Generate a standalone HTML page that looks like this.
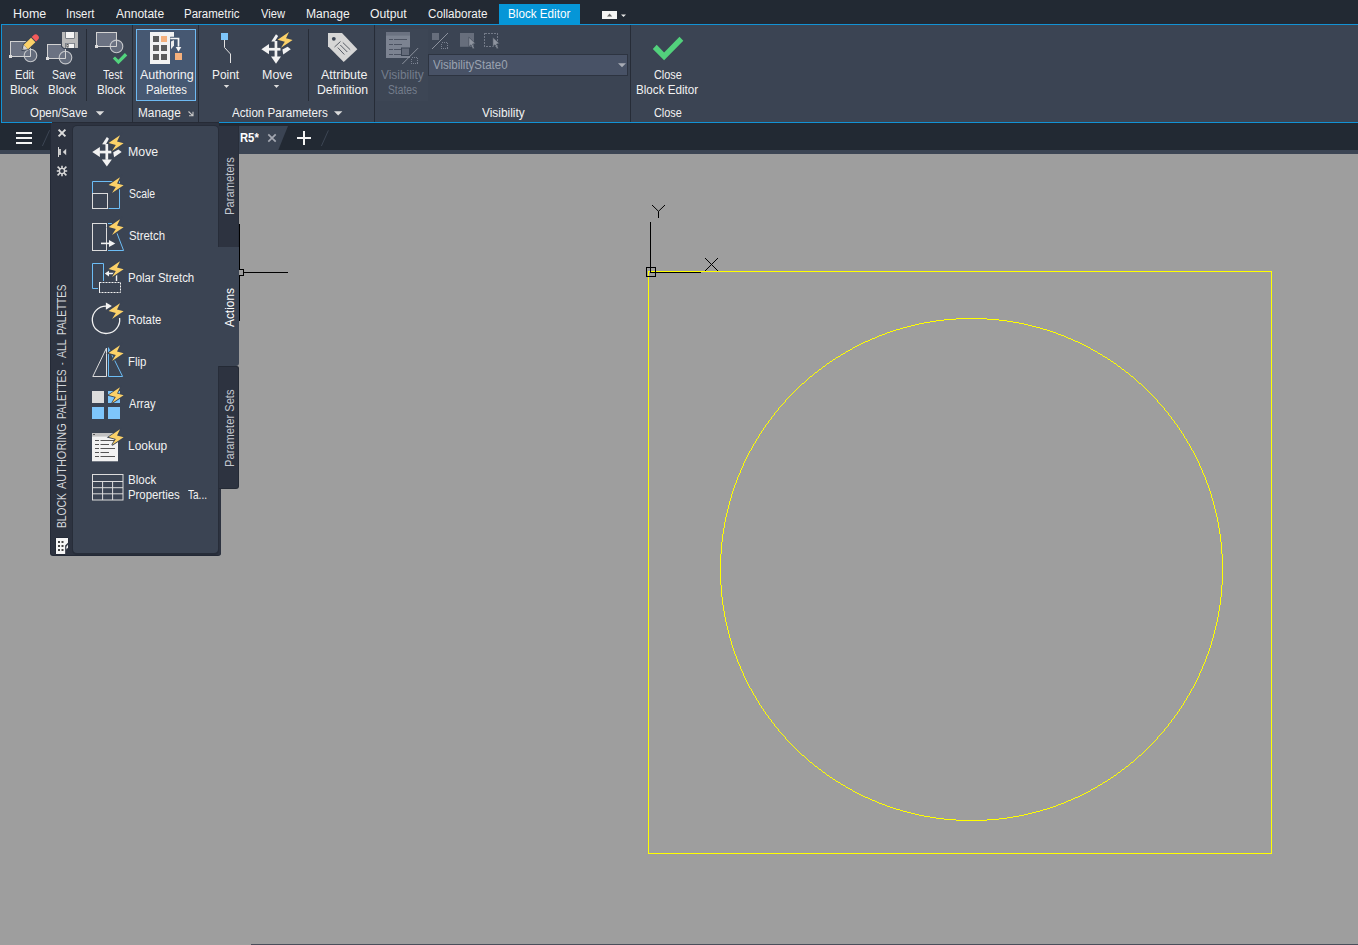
<!DOCTYPE html>
<html>
<head>
<meta charset="utf-8">
<title>Block Editor</title>
<style>
html,body{margin:0;padding:0;}
body{width:1358px;height:945px;overflow:hidden;background:#9e9e9e;font-family:"Liberation Sans",sans-serif;position:relative;}
.a{position:absolute;}
.t{position:absolute;white-space:nowrap;font-size:12.5px;line-height:14px;color:#f2f2f2;transform-origin:0 0;}
.v{position:absolute;white-space:nowrap;font-size:12.5px;line-height:14px;color:#f2f2f2;transform-origin:0 0;}
svg{position:absolute;overflow:visible;}
.sep{position:absolute;width:1px;background:#262c37;}
</style>
</head>
<body>
<!-- ===== top menu bar ===== -->
<div class="a" style="left:0;top:0;width:1358px;height:24px;background:#222933;"></div>
<div class="a" style="left:499px;top:4px;width:81px;height:21px;background:#0696d7;"></div>
<div class="a" style="left:602px;top:11px;width:15px;height:8px;background:#f4f4f4;"></div>
<svg style="left:602px;top:11px;" width="26" height="8"><path d="M5 5.6 L7.6 2.6 L10.2 5.6Z" fill="#666"/><path d="M19 3.5 L24 3.5 L21.5 6Z" fill="#e8e8e8"/></svg>

<!-- ===== ribbon ===== -->
<div class="a" style="left:0;top:24px;width:1358px;height:99px;background:#3b4453;"></div>
<div class="a" style="left:499px;top:4px;width:81px;height:21px;background:#0696d7;"></div>
<div class="a" style="left:0;top:24px;width:499px;height:1px;background:#1292d5;"></div>
<div class="a" style="left:580px;top:24px;width:778px;height:1px;background:#1292d5;"></div>
<div class="a" style="left:0;top:122px;width:1358px;height:1px;background:#1292d5;"></div>
<div class="a" style="left:1px;top:24px;width:1px;height:99px;background:#1292d5;"></div>
<div class="a" style="left:0;top:24px;width:1px;height:99px;background:#222933;"></div>
<!-- panel separators -->
<div class="sep" style="left:132px;top:25px;height:97px;"></div>
<div class="sep" style="left:198px;top:25px;height:97px;"></div>
<div class="sep" style="left:374px;top:25px;height:97px;"></div>
<div class="sep" style="left:630px;top:25px;height:97px;"></div>
<!-- inner separators -->
<div class="sep" style="left:86px;top:29px;height:72px;"></div>
<div class="sep" style="left:308px;top:29px;height:72px;"></div>
<!-- vis-states-bg (disabled button faint bg) -->
<div class="a" style="left:376px;top:29px;width:52px;height:72px;background:#3d4655;"></div>
<!-- authoring palettes highlighted button -->
<div class="a" style="left:136px;top:29px;width:58px;height:70px;background:#465872;border:1px solid #6db9f2;"></div>
<svg style="left:0;top:0;" width="1358" height="124" viewBox="0 0 1358 124">
<!-- Edit Block -->
<rect x="10.5" y="41.5" width="20" height="15" fill="#6b7282" stroke="#d2d2d2"/>
<circle cx="30.5" cy="55.5" r="6.3" fill="#6b7282" fill-opacity="0.85" stroke="#c4c6ca" stroke-width="1.1"/>
<path d="M10.5 56.5 H30.5 V41.5" fill="none" stroke="#d2d2d2"/>
<rect x="9" y="55" width="3" height="3" fill="#dcdcdc"/>
<g transform="translate(22.5,50.1) rotate(-43.5)">
  <path d="M0 0 L4.6 -3.1 H15.3 V-3.1 H18.2 A3.1 3.1 0 0 1 18.2 3.1 H4.6Z" fill="#3b4453" stroke="#3b4453" stroke-width="1.6"/>
  <path d="M0 0 L4.6 -3.1 L4.6 3.1Z" fill="#d4d4d4"/>
  <path d="M0 0 L1.8 -1.2 L1.8 1.2Z" fill="#9a9a9a"/>
  <rect x="4.6" y="-3.1" width="10.2" height="6.2" fill="#fbd168"/>
  <path d="M15.7 -3.1 H18.2 A3.1 3.1 0 0 1 18.2 3.1 H15.7Z" fill="#f55b5b"/>
</g>
<!-- Save Block -->
<rect x="47.5" y="44.5" width="18" height="14" fill="#6b7282" stroke="#d2d2d2"/>
<circle cx="65.5" cy="57.6" r="6.3" fill="#6b7282" fill-opacity="0.85" stroke="#c4c6ca" stroke-width="1.1"/>
<path d="M47.5 58.5 H65.5 V44.5" fill="none" stroke="#d2d2d2"/>
<rect x="46" y="57" width="3" height="3" fill="#dcdcdc"/>
<path d="M61 31 H79 V49 H63.5 L61 46.5Z" fill="#3b4453"/>
<path d="M62 32 H78 V48 H64 L62 46Z" fill="#b9b9b9"/>
<rect x="65.5" y="31.5" width="9" height="7" fill="#3b4453"/><rect x="66" y="32" width="8" height="6" fill="#f4f4f4"/>
<rect x="65.5" y="43" width="9" height="5.5" fill="#3b4453"/><rect x="66" y="43.6" width="8" height="4.4" fill="#f4f4f4"/>
<rect x="66.8" y="44.6" width="1.4" height="2.6" fill="none" stroke="#444" stroke-width="0.7"/>
<!-- Test Block -->
<rect x="96.5" y="32.5" width="20" height="14" fill="#6b7282" stroke="#d2d2d2"/>
<circle cx="116.5" cy="46.4" r="6.3" fill="#6b7282" fill-opacity="0.85" stroke="#c4c6ca" stroke-width="1.1"/>
<path d="M96.5 46.5 H116.5 V32.5" fill="none" stroke="#d2d2d2"/>
<rect x="95" y="45" width="3" height="3" fill="#dcdcdc"/>
<path d="M112.8 58.6 L115 56.4 L118.4 59.8 L124.9 53.1 L127.3 55.4 L118.4 64.3Z" fill="#52d37d"/>
<!-- Authoring palettes -->
<path d="M150 32 H174 V37.2 H170 V64 H150Z" fill="#f2f2f2"/>
<path d="M171 41.6 L174 39.7 V45.6 L171 49.2Z" fill="#ececec"/>
<rect x="153" y="36" width="6" height="6" fill="#5b5b5b"/><rect x="161" y="36" width="6" height="6" fill="#f5b07c"/>
<rect x="153" y="45" width="6" height="6" fill="#5b5b5b"/><rect x="161" y="45" width="6" height="6" fill="#5b5b5b"/>
<rect x="153" y="54" width="6" height="6" fill="#5b5b5b"/><rect x="161" y="54" width="6" height="6" fill="#5b5b5b"/>
<path d="M170.3 38.5 H178.5 V48" fill="none" stroke="#465872" stroke-width="3.4"/><path d="M170.3 38.5 H178.5 V48" fill="none" stroke="#f6f6f6" stroke-width="1.7"/>
<path d="M175.7 47 H181.3 L178.5 51.7Z" fill="#f6f6f6" stroke="#465872" stroke-width="0.8" paint-order="stroke"/>
<rect x="175" y="53" width="7" height="7" fill="#f5b07c"/>
<!-- Point -->
<rect x="221" y="33" width="7" height="7" fill="#7ec6fb"/>
<path d="M224.5 40 V47.5 L230.5 54 V63" fill="none" stroke="#e2e2e2" stroke-width="1"/>
<path d="M223.8 85 H229.2 L226.5 88Z" fill="#dcdcdc"/>
<!-- Move -->
<g transform="translate(260,30)"><path d="M11.3 11.4 L16 4.3 L18.1 5.9 L15 11.6Z" fill="#f2f2f2"/>
    <path d="M22.4 19.5 L27.6 16.8 L30.8 19.2 L23.2 24.4Z" fill="#f2f2f2"/>
    <path d="M1.4 19.2 L9 14.1 L9 24.3Z" fill="#f2f2f2"/>
    <path d="M11 26.6 L21 26.6 L16 33.8Z" fill="#f2f2f2"/>
    <rect x="8.5" y="17.9" width="12" height="2.7" fill="#f2f2f2"/>
    <rect x="14.6" y="11" width="2.7" height="16" fill="#f2f2f2"/></g>
<path transform="translate(289,32)" d="M0 0 L-11.4 7.8 L-4.2 9.7 L-8 15.8 L3.6 8 L-3 6.2Z" fill="#fbd168" stroke="#3b4453" stroke-width="2" paint-order="stroke"/>
<path d="M273.8 85 H279.2 L276.5 88Z" fill="#dcdcdc"/>
<!-- Attribute definition -->
<path d="M328 33 H342 L357.4 49.2 L343.7 62 L328 46.2Z" fill="#d6d6d6"/>
<circle cx="333.8" cy="38.8" r="1.9" fill="#3b4453"/>
<g stroke="#4a4f5a" stroke-width="0.9" fill="none">
<path d="M334.5 47 L340.5 41.5"/>
<path d="M337.8 47.6 L344.3 54.5"/>
<path d="M340.3 45 L347.3 52"/>
<path d="M342.8 42.5 L350.2 49.7"/>
</g>
<!-- Visibility states (disabled) -->
<rect x="386" y="32" width="24" height="26" fill="#7c8391"/>
<rect x="386" y="32" width="24" height="3.6" fill="#6b7281"/>
<g stroke="#4c5362" stroke-width="1">
<path d="M389 39.5 H393 M394 39.5 H407"/>
<path d="M389 44.5 H393 M394 44.5 H402"/>
<path d="M389 49.5 H393 M394 49.5 H401"/>
<path d="M389 54.5 H393 M394 54.5 H401"/>
</g>
<rect x="401.5" y="48" width="8" height="7.5" fill="#646b7a" stroke="#3b4453" stroke-width="1"/>
<path d="M402.3 64 L418.1 48.1" stroke="#8c929e" stroke-width="1" fill="none"/>
<rect x="411.5" y="57.5" width="6" height="6" fill="none" stroke="#7a8190" stroke-width="1" stroke-dasharray="1 1" shape-rendering="crispEdges"/>
<!-- small icons -->
<rect x="432" y="33" width="7" height="7" fill="#676e7c"/>
<path d="M432 49 L448 33" stroke="#8c929e" stroke-width="1" fill="none"/>
<rect x="441.5" y="42.5" width="6" height="6" fill="none" stroke="#7a8190" stroke-width="1" stroke-dasharray="1 1" shape-rendering="crispEdges"/>
<rect x="460" y="33" width="14" height="13.8" fill="#676e7c"/>
<path d="M468.8 37.2 L475.5 43.6 L472.6 44 L474.4 48.2 L472.8 49 L471 44.8 L468.8 46.8Z" fill="#8e949f" stroke="#3b4453" stroke-width="0.6"/>
<rect x="484.5" y="33.5" width="13" height="13" fill="none" stroke="#737a88" stroke-width="1" stroke-dasharray="2 1" shape-rendering="crispEdges"/>
<path d="M492.8 37.2 L499.5 43.6 L496.6 44 L498.4 48.2 L496.8 49 L495 44.8 L492.8 46.8Z" fill="#8e949f" stroke="#3b4453" stroke-width="0.6"/>
<!-- dropdown -->
<rect x="428.5" y="54.5" width="199" height="21" fill="#485266" stroke="#2d3441"/>
<path d="M618 63.2 H626 L622 67.2Z" fill="#a9adb6"/>
<!-- Close -->
<path d="M652.8 48.9 L656.7 44.8 L664.1 52.4 L679.5 36.7 L683.3 40.7 L664.1 60.2Z" fill="#52d17c"/>
<!-- panel title arrows -->
<path d="M95.8 111.2 H104.2 L100 115.4Z" fill="#dcdcdc"/>
<path d="M334 111.2 H342.4 L338.2 115.4Z" fill="#dcdcdc"/>
<path d="M188.5 111.5 L192.5 115.3 M193 111.8 V115.7 H189" stroke="#c8c8c8" stroke-width="1.1" fill="none"/>
</svg>


<!-- ===== file tab bar ===== -->
<div class="a" style="left:0;top:123px;width:1358px;height:27px;background:#222933;"></div>
<div class="a" style="left:0;top:150px;width:1358px;height:4px;background:#3c4554;"></div>
<svg style="left:0;top:0;" width="1358" height="160" viewBox="0 0 1358 160">
<rect x="16" y="132" width="16" height="2" fill="#f4f4f4"/>
<rect x="16" y="137" width="16" height="2" fill="#f4f4f4"/>
<rect x="16" y="142" width="16" height="2" fill="#f4f4f4"/>
<path d="M42.4 146 L49.6 130.2" stroke="#3c4553" stroke-width="1" fill="none"/>
<!-- file tab -->
<path d="M225 126 H288 L278.3 150 H225Z" fill="#3b4453"/>
<path d="M268.3 134.3 L275.7 141.7 M275.7 134.3 L268.3 141.7" stroke="#a4a8b2" stroke-width="1.7" fill="none"/>
<rect x="297" y="137" width="14" height="2" fill="#f4f4f4"/>
<rect x="303" y="131" width="2" height="14" fill="#f4f4f4"/>
<path d="M321.4 146 L328.4 130.4" stroke="#3c4553" stroke-width="1" fill="none"/>
</svg>


<!-- ===== canvas ===== -->
<div class="a" style="left:0;top:154px;width:1358px;height:791px;background:#9e9e9e;"></div>
<svg style="left:0;top:0;" width="1358" height="945" viewBox="0 0 1358 945" shape-rendering="crispEdges">
<rect x="648.5" y="271.5" width="623" height="582" fill="none" stroke="#ffff00" stroke-width="1"/>
<path fill="#ffff00" d="M956 318h31v1h-31zM944 319h12v1h-12zM987 319h12v1h-12zM936 320h8v1h-8zM999 320h8v1h-8zM930 321h6v1h-6zM1007 321h6v1h-6zM924 322h6v1h-6zM1013 322h6v1h-6zM919 323h5v1h-5zM1019 323h5v1h-5zM915 324h4v1h-4zM1024 324h4v1h-4zM911 325h4v1h-4zM1028 325h4v1h-4zM907 326h4v1h-4zM1032 326h4v1h-4zM903 327h4v1h-4zM1036 327h4v1h-4zM900 328h3v1h-3zM1040 328h3v1h-3zM896 329h4v1h-4zM1043 329h4v1h-4zM893 330h3v1h-3zM1047 330h3v1h-3zM890 331h3v1h-3zM1050 331h3v1h-3zM887 332h3v1h-3zM1053 332h3v1h-3zM885 333h2v1h-2zM1056 333h2v1h-2zM882 334h3v1h-3zM1058 334h3v1h-3zM879 335h3v1h-3zM1061 335h3v1h-3zM877 336h2v1h-2zM1064 336h2v1h-2zM875 337h2v1h-2zM1066 337h2v1h-2zM872 338h3v1h-3zM1068 338h3v1h-3zM870 339h2v1h-2zM1071 339h2v1h-2zM868 340h2v1h-2zM1073 340h2v1h-2zM865 341h3v1h-3zM1075 341h3v1h-3zM863 342h2v1h-2zM1078 342h2v1h-2zM861 343h2v1h-2zM1080 343h2v1h-2zM859 344h2v1h-2zM1082 344h2v1h-2zM857 345h2v1h-2zM1084 345h2v1h-2zM855 346h2v1h-2zM1086 346h2v1h-2zM853 347h2v1h-2zM1088 347h2v1h-2zM852 348h1v1h-1zM1090 348h1v1h-1zM850 349h2v1h-2zM1091 349h2v1h-2zM848 350h2v1h-2zM1093 350h2v1h-2zM846 351h2v1h-2zM1095 351h2v1h-2zM845 352h1v1h-1zM1097 352h1v1h-1zM843 353h2v1h-2zM1098 353h2v1h-2zM841 354h2v1h-2zM1100 354h2v1h-2zM840 355h1v1h-1zM1102 355h1v1h-1zM838 356h2v1h-2zM1103 356h2v1h-2zM836 357h2v1h-2zM1105 357h2v1h-2zM835 358h1v1h-1zM1107 358h1v1h-1zM833 359h2v1h-2zM1108 359h2v1h-2zM832 360h1v1h-1zM1110 360h1v1h-1zM830 361h2v1h-2zM1111 361h2v1h-2zM829 362h1v1h-1zM1113 362h1v1h-1zM827 363h2v1h-2zM1114 363h2v1h-2zM826 364h1v1h-1zM1116 364h1v1h-1zM825 365h1v1h-1zM1117 365h1v1h-1zM823 366h2v1h-2zM1118 366h2v1h-2zM822 367h1v1h-1zM1120 367h1v1h-1zM821 368h1v1h-1zM1121 368h1v1h-1zM819 369h2v1h-2zM1122 369h2v1h-2zM818 370h1v1h-1zM1124 370h1v1h-1zM817 371h1v1h-1zM1125 371h1v1h-1zM815 372h2v1h-2zM1126 372h2v1h-2zM814 373h1v1h-1zM1128 373h1v1h-1zM813 374h1v1h-1zM1129 374h1v1h-1zM812 375h1v1h-1zM1130 375h1v1h-1zM810 376h2v1h-2zM1131 376h2v1h-2zM809 377h1v1h-1zM1133 377h1v1h-1zM808 378h1v1h-1zM1134 378h1v1h-1zM807 379h1v1h-1zM1135 379h1v1h-1zM806 380h1v1h-1zM1136 380h1v1h-1zM805 381h1v1h-1zM1137 381h1v1h-1zM804 382h1v1h-1zM1138 382h1v1h-1zM802 383h2v1h-2zM1139 383h2v1h-2zM801 384h1v1h-1zM1141 384h1v1h-1zM800 385h1v1h-1zM1142 385h1v1h-1zM799 386h1v1h-1zM1143 386h1v1h-1zM798 387h1v1h-1zM1144 387h1v1h-1zM797 388h1v1h-1zM1145 388h1v1h-1zM796 389h1v1h-1zM1146 389h1v1h-1zM795 390h1v1h-1zM1147 390h1v1h-1zM794 391h1v1h-1zM1148 391h1v1h-1zM793 392h1v1h-1zM1149 392h1v1h-1zM792 393h1v1h-1zM1150 393h1v1h-1zM791 394h1v1h-1zM1151 394h1v1h-1zM790 395h1v1h-1zM1152 395h1v1h-1zM789 396h1v1h-1zM1153 396h1v1h-1zM788 397h1v1h-1zM1154 397h1v1h-1zM787 398h1v1h-1zM1155 398h1v1h-1zM786 399h1v1h-1zM1156 399h1v1h-1zM785 400h1v1h-1zM1157 400h1v1h-1zM785 401h1v1h-1zM1157 401h1v1h-1zM784 402h1v1h-1zM1158 402h1v1h-1zM783 403h1v1h-1zM1159 403h1v1h-1zM782 404h1v1h-1zM1160 404h1v1h-1zM781 405h1v1h-1zM1161 405h1v1h-1zM780 406h1v1h-1zM1162 406h1v1h-1zM779 407h1v1h-1zM1163 407h1v1h-1zM778 408h1v1h-1zM1164 408h1v1h-1zM778 409h1v1h-1zM1164 409h1v1h-1zM777 410h1v1h-1zM1165 410h1v1h-1zM776 411h1v1h-1zM1166 411h1v1h-1zM775 412h1v1h-1zM1167 412h1v1h-1zM774 413h1v1h-1zM1168 413h1v1h-1zM774 414h1v1h-1zM1168 414h1v1h-1zM773 415h1v1h-1zM1169 415h1v1h-1zM772 416h1v1h-1zM1170 416h1v1h-1zM771 417h1v1h-1zM1171 417h1v1h-1zM771 418h1v1h-1zM1171 418h1v1h-1zM770 419h1v1h-1zM1172 419h1v1h-1zM769 420h1v1h-1zM1173 420h1v1h-1zM768 421h1v1h-1zM1174 421h1v1h-1zM768 422h1v1h-1zM1174 422h1v1h-1zM767 423h1v1h-1zM1175 423h1v1h-1zM766 424h1v1h-1zM1176 424h1v1h-1zM765 425h1v1h-1zM1177 425h1v1h-1zM765 426h1v1h-1zM1177 426h1v1h-1zM764 427h1v1h-1zM1178 427h1v1h-1zM763 428h1v1h-1zM1179 428h1v1h-1zM763 429h1v1h-1zM1179 429h1v1h-1zM762 430h1v1h-1zM1180 430h1v1h-1zM761 431h1v1h-1zM1181 431h1v1h-1zM761 432h1v1h-1zM1181 432h1v1h-1zM760 433h1v1h-1zM1182 433h1v1h-1zM759 434h1v1h-1zM1183 434h1v1h-1zM759 435h1v1h-1zM1183 435h1v1h-1zM758 436h1v1h-1zM1184 436h1v1h-1zM758 437h1v1h-1zM1184 437h1v1h-1zM757 438h1v1h-1zM1185 438h1v1h-1zM756 439h1v1h-1zM1186 439h1v1h-1zM756 440h1v1h-1zM1186 440h1v1h-1zM755 441h1v1h-1zM1187 441h1v1h-1zM755 442h1v1h-1zM1187 442h1v1h-1zM754 443h1v1h-1zM1188 443h1v1h-1zM753 444h1v1h-1zM1189 444h1v1h-1zM753 445h1v1h-1zM1189 445h1v1h-1zM752 446h1v1h-1zM1190 446h1v1h-1zM752 447h1v1h-1zM1190 447h1v1h-1zM751 448h1v1h-1zM1191 448h1v1h-1zM751 449h1v1h-1zM1191 449h1v1h-1zM750 450h1v1h-1zM1192 450h1v1h-1zM749 451h1v1h-1zM1193 451h1v1h-1zM749 452h1v1h-1zM1193 452h1v1h-1zM748 453h1v1h-1zM1194 453h1v1h-1zM748 454h1v1h-1zM1194 454h1v1h-1zM747 455h1v1h-1zM1195 455h1v1h-1zM747 456h1v1h-1zM1195 456h1v1h-1zM746 457h1v1h-1zM1196 457h1v1h-1zM746 458h1v1h-1zM1196 458h1v1h-1zM745 459h1v1h-1zM1197 459h1v1h-1zM745 460h1v1h-1zM1197 460h1v1h-1zM744 461h1v1h-1zM1198 461h1v1h-1zM744 462h1v1h-1zM1198 462h1v1h-1zM743 463h1v1h-1zM1199 463h1v1h-1zM743 464h1v1h-1zM1199 464h1v1h-1zM743 465h1v1h-1zM1199 465h1v1h-1zM742 466h1v1h-1zM1200 466h1v1h-1zM742 467h1v1h-1zM1200 467h1v1h-1zM741 468h1v1h-1zM1201 468h1v1h-1zM741 469h1v1h-1zM1201 469h1v1h-1zM740 470h1v1h-1zM1202 470h1v1h-1zM740 471h1v1h-1zM1202 471h1v1h-1zM740 472h1v1h-1zM1202 472h1v1h-1zM739 473h1v1h-1zM1203 473h1v1h-1zM739 474h1v1h-1zM1203 474h1v1h-1zM738 475h1v1h-1zM1204 475h1v1h-1zM738 476h1v1h-1zM1204 476h1v1h-1zM737 477h1v1h-1zM1205 477h1v1h-1zM737 478h1v1h-1zM1205 478h1v1h-1zM737 479h1v1h-1zM1205 479h1v1h-1zM736 480h1v1h-1zM1206 480h1v1h-1zM736 481h1v1h-1zM1206 481h1v1h-1zM736 482h1v1h-1zM1206 482h1v1h-1zM735 483h1v1h-1zM1207 483h1v1h-1zM735 484h1v1h-1zM1207 484h1v1h-1zM734 485h1v1h-1zM1208 485h1v1h-1zM734 486h1v1h-1zM1208 486h1v1h-1zM734 487h1v1h-1zM1208 487h1v1h-1zM733 488h1v1h-1zM1209 488h1v1h-1zM733 489h1v1h-1zM1209 489h1v1h-1zM733 490h1v1h-1zM1209 490h1v1h-1zM732 491h1v1h-1zM1210 491h1v1h-1zM732 492h1v1h-1zM1210 492h1v1h-1zM732 493h1v1h-1zM1210 493h1v1h-1zM731 494h1v1h-1zM1211 494h1v1h-1zM731 495h1v1h-1zM1211 495h1v1h-1zM731 496h1v1h-1zM1211 496h1v1h-1zM731 497h1v1h-1zM1211 497h1v1h-1zM730 498h1v1h-1zM1212 498h1v1h-1zM730 499h1v1h-1zM1212 499h1v1h-1zM730 500h1v1h-1zM1212 500h1v1h-1zM729 501h1v1h-1zM1213 501h1v1h-1zM729 502h1v1h-1zM1213 502h1v1h-1zM729 503h1v1h-1zM1213 503h1v1h-1zM729 504h1v1h-1zM1213 504h1v1h-1zM728 505h1v1h-1zM1214 505h1v1h-1zM728 506h1v1h-1zM1214 506h1v1h-1zM728 507h1v1h-1zM1214 507h1v1h-1zM728 508h1v1h-1zM1214 508h1v1h-1zM727 509h1v1h-1zM1215 509h1v1h-1zM727 510h1v1h-1zM1215 510h1v1h-1zM727 511h1v1h-1zM1215 511h1v1h-1zM727 512h1v1h-1zM1215 512h1v1h-1zM726 513h1v1h-1zM1216 513h1v1h-1zM726 514h1v1h-1zM1216 514h1v1h-1zM726 515h1v1h-1zM1216 515h1v1h-1zM726 516h1v1h-1zM1216 516h1v1h-1zM725 517h1v1h-1zM1217 517h1v1h-1zM725 518h1v1h-1zM1217 518h1v1h-1zM725 519h1v1h-1zM1217 519h1v1h-1zM725 520h1v1h-1zM1217 520h1v1h-1zM725 521h1v1h-1zM1217 521h1v1h-1zM724 522h1v1h-1zM1218 522h1v1h-1zM724 523h1v1h-1zM1218 523h1v1h-1zM724 524h1v1h-1zM1218 524h1v1h-1zM724 525h1v1h-1zM1218 525h1v1h-1zM724 526h1v1h-1zM1218 526h1v1h-1zM724 527h1v1h-1zM1218 527h1v1h-1zM723 528h1v1h-1zM1219 528h1v1h-1zM723 529h1v1h-1zM1219 529h1v1h-1zM723 530h1v1h-1zM1219 530h1v1h-1zM723 531h1v1h-1zM1219 531h1v1h-1zM723 532h1v1h-1zM1219 532h1v1h-1zM723 533h1v1h-1zM1219 533h1v1h-1zM722 534h1v1h-1zM1220 534h1v1h-1zM722 535h1v1h-1zM1220 535h1v1h-1zM722 536h1v1h-1zM1220 536h1v1h-1zM722 537h1v1h-1zM1220 537h1v1h-1zM722 538h1v1h-1zM1220 538h1v1h-1zM722 539h1v1h-1zM1220 539h1v1h-1zM722 540h1v1h-1zM1220 540h1v1h-1zM722 541h1v1h-1zM1220 541h1v1h-1zM721 542h1v1h-1zM1221 542h1v1h-1zM721 543h1v1h-1zM1221 543h1v1h-1zM721 544h1v1h-1zM1221 544h1v1h-1zM721 545h1v1h-1zM1221 545h1v1h-1zM721 546h1v1h-1zM1221 546h1v1h-1zM721 547h1v1h-1zM1221 547h1v1h-1zM721 548h1v1h-1zM1221 548h1v1h-1zM721 549h1v1h-1zM1221 549h1v1h-1zM721 550h1v1h-1zM1221 550h1v1h-1zM721 551h1v1h-1zM1221 551h1v1h-1zM721 552h1v1h-1zM1221 552h1v1h-1zM721 553h1v1h-1zM1221 553h1v1h-1zM720 554h1v1h-1zM1222 554h1v1h-1zM720 555h1v1h-1zM1222 555h1v1h-1zM720 556h1v1h-1zM1222 556h1v1h-1zM720 557h1v1h-1zM1222 557h1v1h-1zM720 558h1v1h-1zM1222 558h1v1h-1zM720 559h1v1h-1zM1222 559h1v1h-1zM720 560h1v1h-1zM1222 560h1v1h-1zM720 561h1v1h-1zM1222 561h1v1h-1zM720 562h1v1h-1zM1222 562h1v1h-1zM720 563h1v1h-1zM1222 563h1v1h-1zM720 564h1v1h-1zM1222 564h1v1h-1zM720 565h1v1h-1zM1222 565h1v1h-1zM720 566h1v1h-1zM1222 566h1v1h-1zM720 567h1v1h-1zM1222 567h1v1h-1zM720 568h1v1h-1zM1222 568h1v1h-1zM720 569h1v1h-1zM1222 569h1v1h-1zM720 570h1v1h-1zM1222 570h1v1h-1zM720 571h1v1h-1zM1222 571h1v1h-1zM720 572h1v1h-1zM1222 572h1v1h-1zM720 573h1v1h-1zM1222 573h1v1h-1zM720 574h1v1h-1zM1222 574h1v1h-1zM720 575h1v1h-1zM1222 575h1v1h-1zM720 576h1v1h-1zM1222 576h1v1h-1zM720 577h1v1h-1zM1222 577h1v1h-1zM720 578h1v1h-1zM1222 578h1v1h-1zM720 579h1v1h-1zM1222 579h1v1h-1zM720 580h1v1h-1zM1222 580h1v1h-1zM720 581h1v1h-1zM1222 581h1v1h-1zM720 582h1v1h-1zM1222 582h1v1h-1zM720 583h1v1h-1zM1222 583h1v1h-1zM720 584h1v1h-1zM1222 584h1v1h-1zM721 585h1v1h-1zM1221 585h1v1h-1zM721 586h1v1h-1zM1221 586h1v1h-1zM721 587h1v1h-1zM1221 587h1v1h-1zM721 588h1v1h-1zM1221 588h1v1h-1zM721 589h1v1h-1zM1221 589h1v1h-1zM721 590h1v1h-1zM1221 590h1v1h-1zM721 591h1v1h-1zM1221 591h1v1h-1zM721 592h1v1h-1zM1221 592h1v1h-1zM721 593h1v1h-1zM1221 593h1v1h-1zM721 594h1v1h-1zM1221 594h1v1h-1zM721 595h1v1h-1zM1221 595h1v1h-1zM721 596h1v1h-1zM1221 596h1v1h-1zM722 597h1v1h-1zM1220 597h1v1h-1zM722 598h1v1h-1zM1220 598h1v1h-1zM722 599h1v1h-1zM1220 599h1v1h-1zM722 600h1v1h-1zM1220 600h1v1h-1zM722 601h1v1h-1zM1220 601h1v1h-1zM722 602h1v1h-1zM1220 602h1v1h-1zM722 603h1v1h-1zM1220 603h1v1h-1zM722 604h1v1h-1zM1220 604h1v1h-1zM723 605h1v1h-1zM1219 605h1v1h-1zM723 606h1v1h-1zM1219 606h1v1h-1zM723 607h1v1h-1zM1219 607h1v1h-1zM723 608h1v1h-1zM1219 608h1v1h-1zM723 609h1v1h-1zM1219 609h1v1h-1zM723 610h1v1h-1zM1219 610h1v1h-1zM724 611h1v1h-1zM1218 611h1v1h-1zM724 612h1v1h-1zM1218 612h1v1h-1zM724 613h1v1h-1zM1218 613h1v1h-1zM724 614h1v1h-1zM1218 614h1v1h-1zM724 615h1v1h-1zM1218 615h1v1h-1zM724 616h1v1h-1zM1218 616h1v1h-1zM725 617h1v1h-1zM1217 617h1v1h-1zM725 618h1v1h-1zM1217 618h1v1h-1zM725 619h1v1h-1zM1217 619h1v1h-1zM725 620h1v1h-1zM1217 620h1v1h-1zM725 621h1v1h-1zM1217 621h1v1h-1zM726 622h1v1h-1zM1216 622h1v1h-1zM726 623h1v1h-1zM1216 623h1v1h-1zM726 624h1v1h-1zM1216 624h1v1h-1zM726 625h1v1h-1zM1216 625h1v1h-1zM727 626h1v1h-1zM1215 626h1v1h-1zM727 627h1v1h-1zM1215 627h1v1h-1zM727 628h1v1h-1zM1215 628h1v1h-1zM727 629h1v1h-1zM1215 629h1v1h-1zM728 630h1v1h-1zM1214 630h1v1h-1zM728 631h1v1h-1zM1214 631h1v1h-1zM728 632h1v1h-1zM1214 632h1v1h-1zM728 633h1v1h-1zM1214 633h1v1h-1zM729 634h1v1h-1zM1213 634h1v1h-1zM729 635h1v1h-1zM1213 635h1v1h-1zM729 636h1v1h-1zM1213 636h1v1h-1zM729 637h1v1h-1zM1213 637h1v1h-1zM730 638h1v1h-1zM1212 638h1v1h-1zM730 639h1v1h-1zM1212 639h1v1h-1zM730 640h1v1h-1zM1212 640h1v1h-1zM731 641h1v1h-1zM1211 641h1v1h-1zM731 642h1v1h-1zM1211 642h1v1h-1zM731 643h1v1h-1zM1211 643h1v1h-1zM731 644h1v1h-1zM1211 644h1v1h-1zM732 645h1v1h-1zM1210 645h1v1h-1zM732 646h1v1h-1zM1210 646h1v1h-1zM732 647h1v1h-1zM1210 647h1v1h-1zM733 648h1v1h-1zM1209 648h1v1h-1zM733 649h1v1h-1zM1209 649h1v1h-1zM733 650h1v1h-1zM1209 650h1v1h-1zM734 651h1v1h-1zM1208 651h1v1h-1zM734 652h1v1h-1zM1208 652h1v1h-1zM734 653h1v1h-1zM1208 653h1v1h-1zM735 654h1v1h-1zM1207 654h1v1h-1zM735 655h1v1h-1zM1207 655h1v1h-1zM736 656h1v1h-1zM1206 656h1v1h-1zM736 657h1v1h-1zM1206 657h1v1h-1zM736 658h1v1h-1zM1206 658h1v1h-1zM737 659h1v1h-1zM1205 659h1v1h-1zM737 660h1v1h-1zM1205 660h1v1h-1zM737 661h1v1h-1zM1205 661h1v1h-1zM738 662h1v1h-1zM1204 662h1v1h-1zM738 663h1v1h-1zM1204 663h1v1h-1zM739 664h1v1h-1zM1203 664h1v1h-1zM739 665h1v1h-1zM1203 665h1v1h-1zM740 666h1v1h-1zM1202 666h1v1h-1zM740 667h1v1h-1zM1202 667h1v1h-1zM740 668h1v1h-1zM1202 668h1v1h-1zM741 669h1v1h-1zM1201 669h1v1h-1zM741 670h1v1h-1zM1201 670h1v1h-1zM742 671h1v1h-1zM1200 671h1v1h-1zM742 672h1v1h-1zM1200 672h1v1h-1zM743 673h1v1h-1zM1199 673h1v1h-1zM743 674h1v1h-1zM1199 674h1v1h-1zM743 675h1v1h-1zM1199 675h1v1h-1zM744 676h1v1h-1zM1198 676h1v1h-1zM744 677h1v1h-1zM1198 677h1v1h-1zM745 678h1v1h-1zM1197 678h1v1h-1zM745 679h1v1h-1zM1197 679h1v1h-1zM746 680h1v1h-1zM1196 680h1v1h-1zM746 681h1v1h-1zM1196 681h1v1h-1zM747 682h1v1h-1zM1195 682h1v1h-1zM747 683h1v1h-1zM1195 683h1v1h-1zM748 684h1v1h-1zM1194 684h1v1h-1zM748 685h1v1h-1zM1194 685h1v1h-1zM749 686h1v1h-1zM1193 686h1v1h-1zM749 687h1v1h-1zM1193 687h1v1h-1zM750 688h1v1h-1zM1192 688h1v1h-1zM751 689h1v1h-1zM1191 689h1v1h-1zM751 690h1v1h-1zM1191 690h1v1h-1zM752 691h1v1h-1zM1190 691h1v1h-1zM752 692h1v1h-1zM1190 692h1v1h-1zM753 693h1v1h-1zM1189 693h1v1h-1zM753 694h1v1h-1zM1189 694h1v1h-1zM754 695h1v1h-1zM1188 695h1v1h-1zM755 696h1v1h-1zM1187 696h1v1h-1zM755 697h1v1h-1zM1187 697h1v1h-1zM756 698h1v1h-1zM1186 698h1v1h-1zM756 699h1v1h-1zM1186 699h1v1h-1zM757 700h1v1h-1zM1185 700h1v1h-1zM758 701h1v1h-1zM1184 701h1v1h-1zM758 702h1v1h-1zM1184 702h1v1h-1zM759 703h1v1h-1zM1183 703h1v1h-1zM759 704h1v1h-1zM1183 704h1v1h-1zM760 705h1v1h-1zM1182 705h1v1h-1zM761 706h1v1h-1zM1181 706h1v1h-1zM761 707h1v1h-1zM1181 707h1v1h-1zM762 708h1v1h-1zM1180 708h1v1h-1zM763 709h1v1h-1zM1179 709h1v1h-1zM763 710h1v1h-1zM1179 710h1v1h-1zM764 711h1v1h-1zM1178 711h1v1h-1zM765 712h1v1h-1zM1177 712h1v1h-1zM765 713h1v1h-1zM1177 713h1v1h-1zM766 714h1v1h-1zM1176 714h1v1h-1zM767 715h1v1h-1zM1175 715h1v1h-1zM768 716h1v1h-1zM1174 716h1v1h-1zM768 717h1v1h-1zM1174 717h1v1h-1zM769 718h1v1h-1zM1173 718h1v1h-1zM770 719h1v1h-1zM1172 719h1v1h-1zM771 720h1v1h-1zM1171 720h1v1h-1zM771 721h1v1h-1zM1171 721h1v1h-1zM772 722h1v1h-1zM1170 722h1v1h-1zM773 723h1v1h-1zM1169 723h1v1h-1zM774 724h1v1h-1zM1168 724h1v1h-1zM774 725h1v1h-1zM1168 725h1v1h-1zM775 726h1v1h-1zM1167 726h1v1h-1zM776 727h1v1h-1zM1166 727h1v1h-1zM777 728h1v1h-1zM1165 728h1v1h-1zM778 729h1v1h-1zM1164 729h1v1h-1zM778 730h1v1h-1zM1164 730h1v1h-1zM779 731h1v1h-1zM1163 731h1v1h-1zM780 732h1v1h-1zM1162 732h1v1h-1zM781 733h1v1h-1zM1161 733h1v1h-1zM782 734h1v1h-1zM1160 734h1v1h-1zM783 735h1v1h-1zM1159 735h1v1h-1zM784 736h1v1h-1zM1158 736h1v1h-1zM785 737h1v1h-1zM1157 737h1v1h-1zM785 738h1v1h-1zM1157 738h1v1h-1zM786 739h1v1h-1zM1156 739h1v1h-1zM787 740h1v1h-1zM1155 740h1v1h-1zM788 741h1v1h-1zM1154 741h1v1h-1zM789 742h1v1h-1zM1153 742h1v1h-1zM790 743h1v1h-1zM1152 743h1v1h-1zM791 744h1v1h-1zM1151 744h1v1h-1zM792 745h1v1h-1zM1150 745h1v1h-1zM793 746h1v1h-1zM1149 746h1v1h-1zM794 747h1v1h-1zM1148 747h1v1h-1zM795 748h1v1h-1zM1147 748h1v1h-1zM796 749h1v1h-1zM1146 749h1v1h-1zM797 750h1v1h-1zM1145 750h1v1h-1zM798 751h1v1h-1zM1144 751h1v1h-1zM799 752h1v1h-1zM1143 752h1v1h-1zM800 753h1v1h-1zM1142 753h1v1h-1zM801 754h1v1h-1zM1141 754h1v1h-1zM802 755h2v1h-2zM1139 755h2v1h-2zM804 756h1v1h-1zM1138 756h1v1h-1zM805 757h1v1h-1zM1137 757h1v1h-1zM806 758h1v1h-1zM1136 758h1v1h-1zM807 759h1v1h-1zM1135 759h1v1h-1zM808 760h1v1h-1zM1134 760h1v1h-1zM809 761h1v1h-1zM1133 761h1v1h-1zM810 762h2v1h-2zM1131 762h2v1h-2zM812 763h1v1h-1zM1130 763h1v1h-1zM813 764h1v1h-1zM1129 764h1v1h-1zM814 765h1v1h-1zM1128 765h1v1h-1zM815 766h2v1h-2zM1126 766h2v1h-2zM817 767h1v1h-1zM1125 767h1v1h-1zM818 768h1v1h-1zM1124 768h1v1h-1zM819 769h2v1h-2zM1122 769h2v1h-2zM821 770h1v1h-1zM1121 770h1v1h-1zM822 771h1v1h-1zM1120 771h1v1h-1zM823 772h2v1h-2zM1118 772h2v1h-2zM825 773h1v1h-1zM1117 773h1v1h-1zM826 774h1v1h-1zM1116 774h1v1h-1zM827 775h2v1h-2zM1114 775h2v1h-2zM829 776h1v1h-1zM1113 776h1v1h-1zM830 777h2v1h-2zM1111 777h2v1h-2zM832 778h1v1h-1zM1110 778h1v1h-1zM833 779h2v1h-2zM1108 779h2v1h-2zM835 780h1v1h-1zM1107 780h1v1h-1zM836 781h2v1h-2zM1105 781h2v1h-2zM838 782h2v1h-2zM1103 782h2v1h-2zM840 783h1v1h-1zM1102 783h1v1h-1zM841 784h2v1h-2zM1100 784h2v1h-2zM843 785h2v1h-2zM1098 785h2v1h-2zM845 786h1v1h-1zM1097 786h1v1h-1zM846 787h2v1h-2zM1095 787h2v1h-2zM848 788h2v1h-2zM1093 788h2v1h-2zM850 789h2v1h-2zM1091 789h2v1h-2zM852 790h1v1h-1zM1090 790h1v1h-1zM853 791h2v1h-2zM1088 791h2v1h-2zM855 792h2v1h-2zM1086 792h2v1h-2zM857 793h2v1h-2zM1084 793h2v1h-2zM859 794h2v1h-2zM1082 794h2v1h-2zM861 795h2v1h-2zM1080 795h2v1h-2zM863 796h2v1h-2zM1078 796h2v1h-2zM865 797h3v1h-3zM1075 797h3v1h-3zM868 798h2v1h-2zM1073 798h2v1h-2zM870 799h2v1h-2zM1071 799h2v1h-2zM872 800h3v1h-3zM1068 800h3v1h-3zM875 801h2v1h-2zM1066 801h2v1h-2zM877 802h2v1h-2zM1064 802h2v1h-2zM879 803h3v1h-3zM1061 803h3v1h-3zM882 804h3v1h-3zM1058 804h3v1h-3zM885 805h2v1h-2zM1056 805h2v1h-2zM887 806h3v1h-3zM1053 806h3v1h-3zM890 807h3v1h-3zM1050 807h3v1h-3zM893 808h3v1h-3zM1047 808h3v1h-3zM896 809h4v1h-4zM1043 809h4v1h-4zM900 810h3v1h-3zM1040 810h3v1h-3zM903 811h4v1h-4zM1036 811h4v1h-4zM907 812h4v1h-4zM1032 812h4v1h-4zM911 813h4v1h-4zM1028 813h4v1h-4zM915 814h4v1h-4zM1024 814h4v1h-4zM919 815h5v1h-5zM1019 815h5v1h-5zM924 816h6v1h-6zM1013 816h6v1h-6zM930 817h6v1h-6zM1007 817h6v1h-6zM936 818h8v1h-8zM999 818h8v1h-8zM944 819h12v1h-12zM987 819h12v1h-12zM956 820h31v1h-31z"/>
<!-- UCS icon -->
<rect x="650" y="222" width="1" height="51" fill="#000"/>
<rect x="650" y="272" width="51" height="1" fill="#000"/>
<rect x="646.5" y="267.5" width="9" height="9" fill="none" stroke="#000" stroke-width="1"/>
<g shape-rendering="auto" stroke="#000" stroke-width="1" fill="none">
<path d="M652 205 L658.5 211.3 L665 205 M658.5 211.3 V218"/>
<path d="M705 258 L718 271 M718 258 L705 271"/>
</g>
<!-- hidden parameter grip behind palette -->
<rect x="239" y="224" width="1" height="97" fill="#000"/>
<rect x="243" y="272" width="45" height="1" fill="#000"/>
<rect x="238.5" y="269.5" width="5" height="6" fill="#9e9e9e" stroke="#000" stroke-width="1"/>
</svg>
<div class="a" style="left:251px;top:944px;width:1107px;height:1px;background:#4a4e5a;"></div>


<!-- ===== palette ===== -->
<div class="a" style="left:52px;top:122px;width:167px;height:1px;background:#262b36;"></div>
<div class="a" style="left:50px;top:123px;width:171px;height:433px;background:#232936;border-radius:0 0 3px 3px;"></div>
<div class="a" style="left:51px;top:123px;width:170px;height:432px;background:#2d3340;border-radius:0 0 2px 2px;"></div>
<div class="a" style="left:219px;top:123px;width:20px;height:3px;background:#222831;"></div>
<div class="a" style="left:219px;top:126px;width:20px;height:121px;background:#2d3340;box-shadow:inset -1px 0 0 #282e3a;"></div>
<div class="a" style="left:218px;top:366px;width:21px;height:123px;background:#242a35;border-radius:0 2px 3px 0;"></div><div class="a" style="left:219px;top:367px;width:19px;height:121px;background:#2d3340;border-radius:0 2px 2px 0;"></div>
<div class="a" style="left:72px;top:125px;width:147px;height:430px;background:#272d39;border-radius:5px;"></div>
<div class="a" style="left:73px;top:126px;width:145px;height:427px;background:#3b4453;border-radius:4px;"></div>
<div class="a" style="left:214px;top:247px;width:25px;height:119px;background:#3b4453;border-radius:0 0 3px 0;"></div>
<svg style="left:0;top:0;" width="260" height="560" viewBox="0 0 260 560">
<!-- title strip icons -->
<path d="M58.6 129.6 L65.4 136.4 M65.4 129.6 L58.6 136.4" stroke="#dcdcdc" stroke-width="2" fill="none"/>
<rect x="58" y="147" width="1" height="10" fill="#d4d4d4"/>
<rect x="59" y="149" width="2" height="6" fill="#c4c4c4"/>
<path d="M62.8 152 L66.2 148.8 V155.2Z" fill="#d4d4d4"/>
<g stroke="#d8d8d8" stroke-width="1.6" fill="none">
<path d="M62 165.8 V176.2 M56.8 171 H67.2 M57.6 166.6 L66.4 175.4 M66.4 166.6 L57.6 175.4"/>
</g>
<circle cx="62" cy="171" r="2.6" fill="#2d3340" stroke="#d8d8d8" stroke-width="1.4"/>
<!-- palette icon bottom -->
<path d="M56 538 H68 V542.7 L65.2 545.4 V554 H56Z" fill="#f6f6f6" stroke="#1f2430" stroke-width="1" paint-order="stroke"/>
<g fill="#444">
<rect x="58" y="541" width="2" height="2"/><rect x="61.5" y="541" width="2" height="2"/>
<rect x="58" y="545" width="2" height="2"/><rect x="61.5" y="545" width="2" height="2"/>
<rect x="58" y="549" width="2" height="2"/><rect x="61.5" y="549" width="2" height="2"/>
</g>
<path d="M66.2 547 L68 544.6 V547.2 L66.6 549.4Z" fill="#f2f2f2"/>
<!-- Move -->
<g transform="translate(90.85,132.8)"><path d="M11.3 11.4 L16 4.3 L18.1 5.9 L15 11.6Z" fill="#f2f2f2"/>
    <path d="M22.4 19.5 L27.6 16.8 L30.8 19.2 L23.2 24.4Z" fill="#f2f2f2"/>
    <path d="M1.4 19.2 L9 14.1 L9 24.3Z" fill="#f2f2f2"/>
    <path d="M11 26.6 L21 26.6 L16 33.8Z" fill="#f2f2f2"/>
    <rect x="8.5" y="17.9" width="12" height="2.7" fill="#f2f2f2"/>
    <rect x="14.6" y="11" width="2.7" height="16" fill="#f2f2f2"/></g>
<path transform="translate(120,135.3)" d="M0 0 L-11.4 7.8 L-4.2 9.7 L-8 15.8 L3.6 8 L-3 6.2Z" fill="#fbd168" stroke="#3b4453" stroke-width="2" paint-order="stroke"/>
<!-- Scale -->
<path d="M92.5 193 V181.5 H119.5 V208.5 H108.5" fill="none" stroke="#6cbdf5" stroke-width="1"/>
<rect x="92.5" y="193.5" width="15" height="15" fill="none" stroke="#dcdcdc" stroke-width="1"/>
<path transform="translate(120,177.3)" d="M0 0 L-11.4 7.8 L-4.2 9.7 L-8 15.8 L3.6 8 L-3 6.2Z" fill="#fbd168" stroke="#3b4453" stroke-width="2" paint-order="stroke"/>
<!-- Stretch -->
<path d="M108 223.5 H112 M117 233.3 L123.6 250.5 H108" fill="none" stroke="#6cbdf5" stroke-width="1"/>
<rect x="92.5" y="223.5" width="14" height="27" fill="none" stroke="#dcdcdc" stroke-width="1"/>
<rect x="101" y="242.6" width="8.5" height="1.6" fill="#f2f2f2"/>
<path d="M109 240 L115.3 243.4 L109 246.9Z" fill="#f2f2f2"/>
<path transform="translate(120,219.3)" d="M0 0 L-11.4 7.8 L-4.2 9.7 L-8 15.8 L3.6 8 L-3 6.2Z" fill="#fbd168" stroke="#3b4453" stroke-width="2" paint-order="stroke"/>
<!-- Polar Stretch -->
<path d="M98 288.5 H92.5 V263.5 H103.5 V281" fill="none" stroke="#6cbdf5" stroke-width="1"/>
<rect x="99.5" y="282.5" width="21" height="10" fill="none" stroke="#f2f2f2" stroke-width="1" stroke-dasharray="2 1"/>
<path d="M99.5 282 V293" stroke="#f2f2f2" stroke-width="1" fill="none"/>
<path d="M108.5 273.5 H116.5 V281" fill="none" stroke="#f2f2f2" stroke-width="1.4"/>
<path d="M104.8 273.5 L109 270.7 V276.4Z" fill="#f2f2f2"/>
<path transform="translate(120,261.3)" d="M0 0 L-11.4 7.8 L-4.2 9.7 L-8 15.8 L3.6 8 L-3 6.2Z" fill="#fbd168" stroke="#3b4453" stroke-width="2" paint-order="stroke"/>
<!-- Rotate -->
<path d="M119.6 318 A13.7 13.7 0 1 1 106 306.1" fill="none" stroke="#f2f2f2" stroke-width="1.3"/>
<path d="M105.9 302.5 L111.9 306 L105.9 309.7Z" fill="#f2f2f2"/>
<path transform="translate(120,303.3)" d="M0 0 L-11.4 7.8 L-4.2 9.7 L-8 15.8 L3.6 8 L-3 6.2Z" fill="#fbd168" stroke="#3b4453" stroke-width="2" paint-order="stroke"/>
<!-- Flip -->
<path d="M92.8 376.5 L106.5 348 V376.5Z" fill="none" stroke="#dcdcdc" stroke-width="1"/>
<path d="M108.5 347.5 V376.5 H122.6 L108.5 348" fill="none" stroke="#6cbdf5" stroke-width="1"/>
<path transform="translate(120,345.3)" d="M0 0 L-11.4 7.8 L-4.2 9.7 L-8 15.8 L3.6 8 L-3 6.2Z" fill="#fbd168" stroke="#3b4453" stroke-width="2" paint-order="stroke"/>
<!-- Array -->
<rect x="92" y="391" width="12" height="12" fill="#dcdcdc"/>
<rect x="108" y="391" width="12" height="12" fill="#7ec6fb"/>
<rect x="92" y="407" width="12" height="12" fill="#7ec6fb"/>
<rect x="108" y="407" width="12" height="12" fill="#7ec6fb"/>
<path transform="translate(120,387.3)" d="M0 0 L-11.4 7.8 L-4.2 9.7 L-8 15.8 L3.6 8 L-3 6.2Z" fill="#fbd168" stroke="#3b4453" stroke-width="1.6" paint-order="stroke"/>
<!-- Lookup -->
<rect x="92" y="433" width="26" height="28.3" fill="#f2f2f2"/>
<rect x="92" y="433" width="26" height="3.6" fill="#c2c2c2"/>
<rect x="93" y="434" width="2" height="1" fill="#555"/>
<g stroke="#555" stroke-width="1">
<path d="M95 440.5 H99 M100.5 440.5 H115"/>
<path d="M95 444.5 H99 M100.5 444.5 H109"/>
<path d="M95 448.5 H99 M100.5 448.5 H115"/>
<path d="M95 452.5 H99 M100.5 452.5 H109"/>
<path d="M95 456.5 H99 M100.5 456.5 H115"/>
</g>
<path transform="translate(120,429.3)" d="M0 0 L-11.4 7.8 L-4.2 9.7 L-8 15.8 L3.6 8 L-3 6.2Z" fill="#fbd168" stroke="#3b4453" stroke-width="1.6" paint-order="stroke"/>
<!-- Block Properties Table -->
<g fill="none" stroke="#dcdcdc" stroke-width="1">
<rect x="92.5" y="474.5" width="30.5" height="25.5"/>
<path d="M92.5 481.5 H123 M92.5 487.7 H123 M92.5 493.8 H123 M102.6 481.5 V500 M112.6 481.5 V500"/>
</g>
</svg>


<div class="t" style="left:12.95px;top:6.67px;transform:scaleX(0.9953);">Home</div>
<div class="t" style="left:65.79px;top:6.67px;transform:scaleX(0.9065);">Insert</div>
<div class="t" style="left:115.70px;top:6.67px;transform:scaleX(0.9620);">Annotate</div>
<div class="t" style="left:183.78px;top:6.67px;transform:scaleX(0.9183);">Parametric</div>
<div class="t" style="left:261.20px;top:6.67px;transform:scaleX(0.8926);">View</div>
<div class="t" style="left:305.73px;top:6.67px;transform:scaleX(0.9682);">Manage</div>
<div class="t" style="left:369.70px;top:6.67px;transform:scaleX(0.9763);">Output</div>
<div class="t" style="left:428.20px;top:6.67px;transform:scaleX(0.9313);">Collaborate</div>
<div class="t" style="left:508.37px;top:6.67px;color:#ffffff;transform:scaleX(0.9348);">Block Editor</div>
<div class="t" style="left:15.31px;top:67.67px;transform:scaleX(0.8857);">Edit</div>
<div class="t" style="left:10.37px;top:82.67px;transform:scaleX(0.9300);">Block</div>
<div class="t" style="left:51.70px;top:67.67px;transform:scaleX(0.8357);">Save</div>
<div class="t" style="left:48.27px;top:82.67px;transform:scaleX(0.9267);">Block</div>
<div class="t" style="left:102.50px;top:67.67px;transform:scaleX(0.8478);">Test</div>
<div class="t" style="left:97.18px;top:82.67px;transform:scaleX(0.9233);">Block</div>
<div class="t" style="left:139.70px;top:67.67px;transform:scaleX(1.0019);">Authoring</div>
<div class="t" style="left:146.20px;top:82.67px;transform:scaleX(0.9045);">Palettes</div>
<div class="t" style="left:212.25px;top:67.67px;transform:scaleX(0.9500);">Point</div>
<div class="t" style="left:262.20px;top:67.67px;transform:scaleX(0.9966);">Move</div>
<div class="t" style="left:321.10px;top:67.67px;transform:scaleX(0.9978);">Attribute</div>
<div class="t" style="left:317.42px;top:82.67px;transform:scaleX(0.9824);">Definition</div>
<div class="t" style="left:381.00px;top:67.67px;color:#747d8c;transform:scaleX(0.9511);">Visibility</div>
<div class="t" style="left:388.20px;top:82.67px;color:#747d8c;transform:scaleX(0.8222);">States</div>
<div class="t" style="left:433.10px;top:57.67px;color:#9aa2b0;transform:scaleX(0.9198);">VisibilityState0</div>
<div class="t" style="left:654.00px;top:67.67px;transform:scaleX(0.8719);">Close</div>
<div class="t" style="left:636.37px;top:82.67px;transform:scaleX(0.9318);">Block Editor</div>
<div class="t" style="left:30.30px;top:105.67px;transform:scaleX(0.9161);">Open/Save</div>
<div class="t" style="left:138.25px;top:105.67px;transform:scaleX(0.9455);">Manage</div>
<div class="t" style="left:231.90px;top:105.67px;transform:scaleX(0.9311);">Action Parameters</div>
<div class="t" style="left:481.70px;top:105.67px;transform:scaleX(0.9489);">Visibility</div>
<div class="t" style="left:654.00px;top:105.67px;transform:scaleX(0.8719);">Close</div>
<div class="t" style="left:239.90px;top:130.87px;color:#ffffff;font-weight:700;transform:scaleX(0.9000);">R5*</div>
<div class="t" style="left:128.21px;top:145.17px;transform:scaleX(0.9897);">Move</div>
<div class="t" style="left:129.00px;top:187.17px;transform:scaleX(0.8355);">Scale</div>
<div class="t" style="left:129.00px;top:229.17px;transform:scaleX(0.9103);">Stretch</div>
<div class="t" style="left:128.28px;top:271.17px;transform:scaleX(0.9169);">Polar Stretch</div>
<div class="t" style="left:128.29px;top:313.17px;transform:scaleX(0.9056);">Rotate</div>
<div class="t" style="left:128.49px;top:355.17px;transform:scaleX(0.9105);">Flip</div>
<div class="t" style="left:129.20px;top:397.17px;transform:scaleX(0.8867);">Array</div>
<div class="t" style="left:128.44px;top:439.17px;transform:scaleX(0.9550);">Lookup</div>
<div class="t" style="left:128.18px;top:472.57px;transform:scaleX(0.9233);">Block</div>
<div class="t" style="left:128.19px;top:488.27px;transform:scaleX(0.9089);">Properties</div>
<div class="t" style="left:187.70px;top:488.27px;transform:scaleX(0.8043);">Ta...</div>
<div class="v" style="left:55.00px;top:527.59px;font-size:13px;color:#d4d6da;transform:rotate(-90deg) scaleX(0.7907);">BLOCK</div>
<div class="v" style="left:55.00px;top:488.80px;font-size:13px;color:#d4d6da;transform:rotate(-90deg) scaleX(0.8436);">AUTHORING</div>
<div class="v" style="left:55.00px;top:418.56px;font-size:13px;color:#d4d6da;transform:rotate(-90deg) scaleX(0.7578);">PALETTES</div>
<div class="v" style="left:55.00px;top:364.70px;font-size:13px;color:#d4d6da;transform:rotate(-90deg) scaleX(0.6000);">-</div>
<div class="v" style="left:55.00px;top:357.80px;font-size:13px;color:#d4d6da;transform:rotate(-90deg) scaleX(0.8087);">ALL</div>
<div class="v" style="left:55.00px;top:334.97px;font-size:13px;color:#d4d6da;transform:rotate(-90deg) scaleX(0.7719);">PALETTES</div>
<div class="v" style="left:223.10px;top:215.16px;font-size:13px;color:#c3c7cf;transform:rotate(-90deg) scaleX(0.8621);">Parameters</div>
<div class="v" style="left:223.10px;top:326.90px;font-size:13px;color:#ffffff;transform:rotate(-90deg) scaleX(0.9140);">Actions</div>
<div class="v" style="left:223.10px;top:466.66px;font-size:13px;color:#c3c7cf;transform:rotate(-90deg) scaleX(0.8584);">Parameter Sets</div>
</body>
</html>
